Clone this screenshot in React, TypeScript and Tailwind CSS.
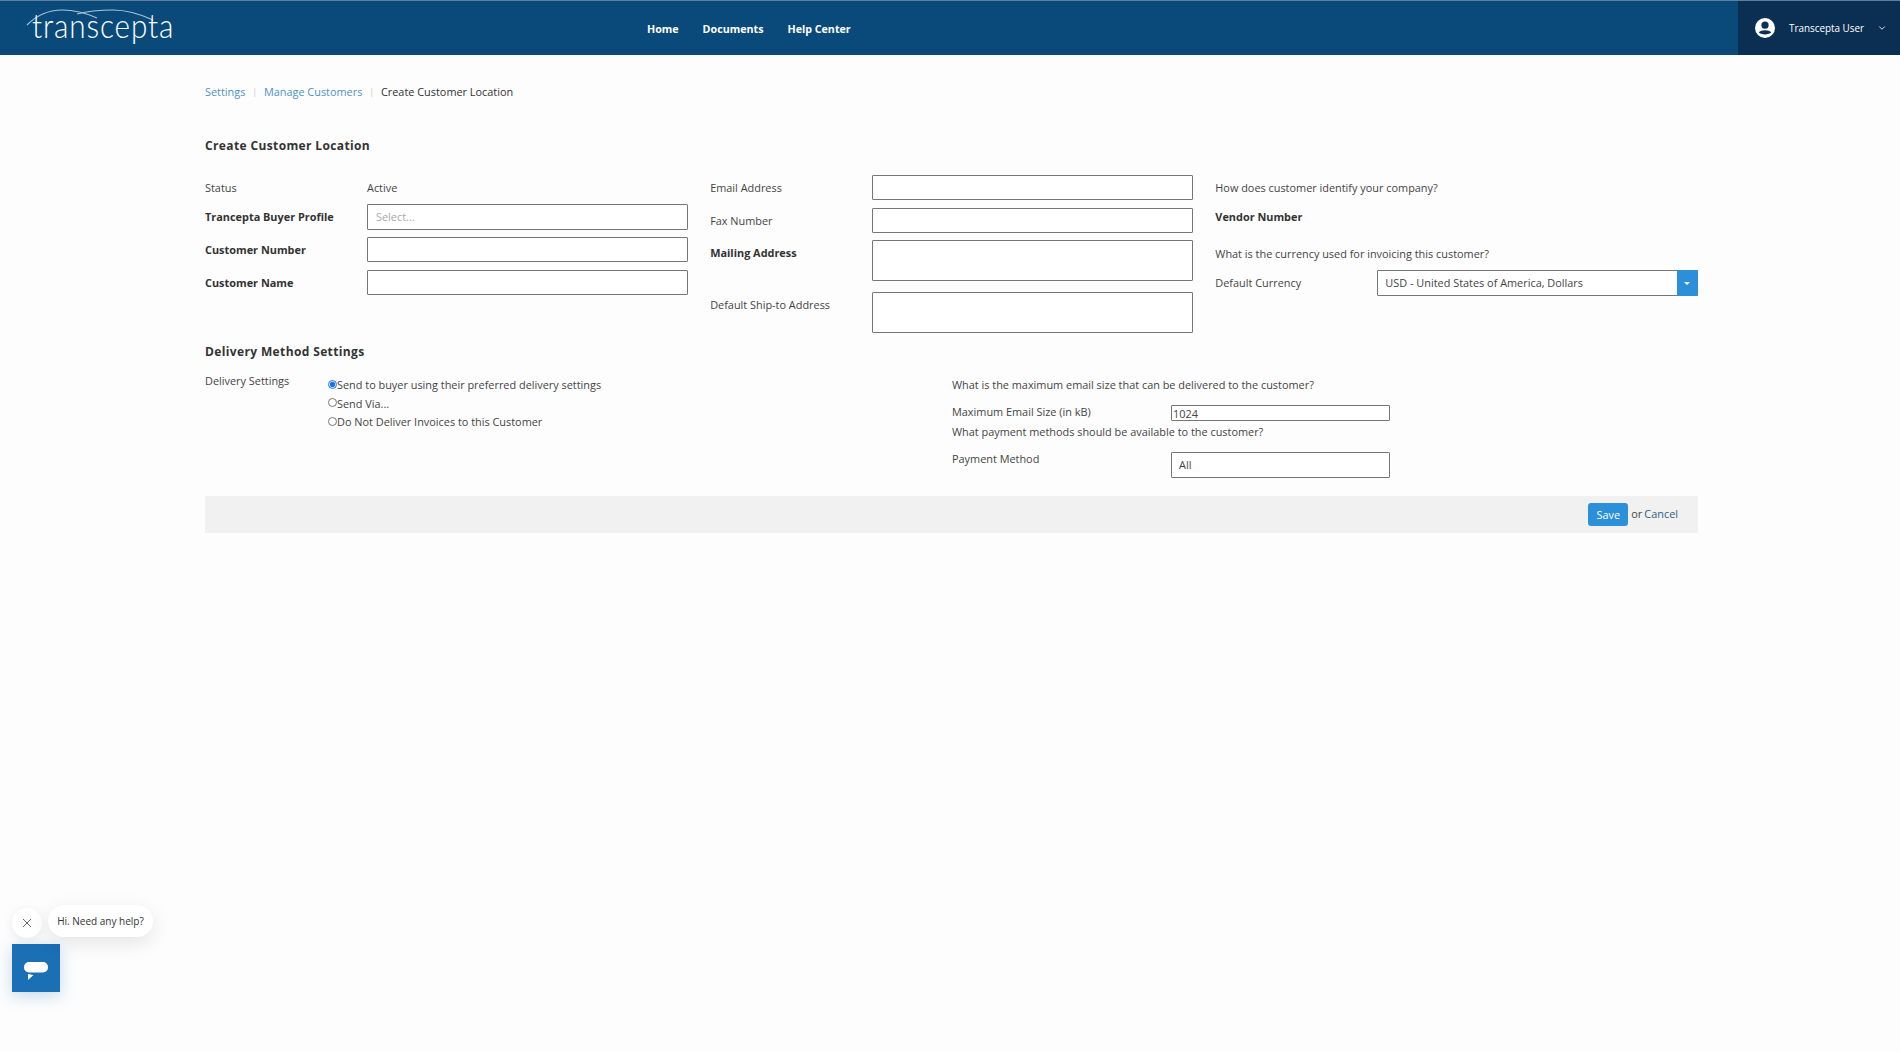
import React from "react";
import { ChevronDown } from "lucide-react";

const box = "border border-[#767676] bg-white rounded-[1px] outline-none";

function Label({ children, bold }: { children: React.ReactNode; bold?: boolean }) {
  return (
    <span className={`w-[162px] shrink-0 leading-[18px] ${bold ? "font-bold text-[#333333]" : "text-[#444444]"}`}>
      {children}
    </span>
  );
}

function Logo() {
  return (
    <div className="relative w-[146px] h-[33px] mt-[1px]">
      <svg className="absolute left-0 top-[-3px]" width="146" height="24" viewBox="0 0 146 24" fill="none">
        <path d="M1 17 C 12 6, 24 2, 36 2 C 48 2, 60 5, 71 10" stroke="#a9c4da" strokeWidth="1.2" />
        <path d="M51 6 C 62 3, 74 2, 87 2 C 100 2, 114 6, 127 12" stroke="#a9c4da" strokeWidth="1.2" />
      </svg>
      <span className="absolute left-[6px] top-[-8px] origin-left scale-x-[0.873] text-[34px] leading-[44px] font-light text-white tracking-[1px] font-['Lato',sans-serif] whitespace-nowrap">
        transcepta
      </span>
    </div>
  );
}

export default function App() {
  return (
    <div className="relative h-[1052px] overflow-hidden bg-[#fdfdfd] text-[10.9px] text-[#444444] font-['Open_Sans',sans-serif]">
      <header className="flex h-[55px] border-t border-[#5f7f9a] bg-[#0a4a7a] text-white">
        <div className="w-[647px] pl-[26px] pt-[9px] shrink-0">
          <Logo />
        </div>
        <nav className="flex flex-1 items-center gap-[24px] pt-[2px] font-bold text-[10.7px]">
          <span>Home</span>
          <span>Documents</span>
          <span>Help Center</span>
        </nav>
        <div className="flex w-[162px] items-center bg-[#0a2f52] pl-[17px] text-[9.9px]">
          <svg width="20" height="20" viewBox="0 0 20 20" className="shrink-0">
            <circle cx="10" cy="10" r="10" fill="#ffffff" />
            <circle cx="10" cy="7.2" r="3.6" fill="#0a2f52" />
            <path d="M3.8 14.6 C 5.5 11.6, 14.5 11.6, 16.2 14.6 C 14.5 17, 5.5 17, 3.8 14.6 Z" fill="#0a2f52" />
          </svg>
          <span className="ml-[14px] whitespace-nowrap">Transcepta User</span>
          <ChevronDown className="ml-[13px] size-[10px]" strokeWidth={2} />
        </div>
      </header>

      <main className="ml-[205px] w-[1493px]">
        <div className="mt-[28px] flex h-[18px] items-center leading-[18px]">
          <span className="text-[#4f93c4]">Settings</span>
          <span className="mx-[6.8px] text-[#c9c9c9] text-[9px]">|</span>
          <span className="text-[#4f93c4]">Manage Customers</span>
          <span className="mx-[6.8px] text-[#c9c9c9] text-[9px]">|</span>
          <span className="text-[#333333]">Create Customer Location</span>
        </div>

        <h1 className="mt-[35.5px] h-[18px] text-[12px] font-bold leading-[18px] tracking-[0.37px] text-[#333333]">
          Create Customer Location
        </h1>

        <div className="mt-[20.5px] grid grid-cols-3 gap-x-[22.5px]">
          <div className="flex flex-col">
            <div className="flex h-[26px] items-center">
              <Label>Status</Label>
              <span className="leading-[18px]">Active</span>
            </div>
            <div className="mt-[3px] flex items-center">
              <Label bold>Trancepta Buyer Profile</Label>
              <input placeholder="Select..." className={`${box} h-[26px] flex-1 min-w-0 px-[8px] pb-[2px] placeholder:text-[#a9a9a9]`} />
            </div>
            <div className="mt-[7px] flex items-center">
              <Label bold>Customer Number</Label>
              <input className={`${box} h-[25px] flex-1 min-w-0`} />
            </div>
            <div className="mt-[8px] flex items-center">
              <Label bold>Customer Name</Label>
              <input className={`${box} h-[25px] flex-1 min-w-0`} />
            </div>
          </div>

          <div className="flex flex-col">
            <div className="flex items-center">
              <Label>Email Address</Label>
              <input className={`${box} h-[25px] flex-1 min-w-0`} />
            </div>
            <div className="mt-[8px] flex items-center">
              <Label>Fax Number</Label>
              <input className={`${box} h-[25px] flex-1 min-w-0`} />
            </div>
            <div className="mt-[7px] flex items-start">
              <div className="w-[162px] shrink-0 pt-[4px]">
                <Label bold>Mailing Address</Label>
              </div>
              <textarea className={`${box} h-[41px] flex-1 min-w-0 resize-none`} />
            </div>
            <div className="mt-[11px] flex items-start">
              <div className="w-[162px] shrink-0 pt-[4px]">
                <Label>Default Ship-to Address</Label>
              </div>
              <textarea className={`${box} h-[41px] flex-1 min-w-0 resize-none`} />
            </div>
          </div>

          <div className="flex flex-col">
            <div className="flex h-[26px] items-center leading-[18px]">How does customer identify your company?</div>
            <div className="mt-[7px] h-[18px] font-bold leading-[18px] text-[#333333]">Vendor Number</div>
            <div className="mt-[19px] h-[18px] leading-[18px]">What is the currency used for invoicing this customer?</div>
            <div className="mt-[7px] flex items-center">
              <Label>Default Currency</Label>
              <div className={`${box} relative flex h-[26px] flex-1 min-w-0 items-center pl-[7px]`}>
                USD - United States of America, Dollars
                <div className="absolute -right-px -top-px -bottom-px flex w-[21px] items-center justify-center rounded-r-[1px] bg-[#2b90d9]">
                  <span className="h-0 w-0 border-x-[3px] border-t-[3px] border-x-transparent border-t-white" />
                </div>
              </div>
            </div>
          </div>
        </div>

        <h2 className="mt-[10px] h-[18px] text-[12px] font-bold leading-[18px] tracking-[0.37px] text-[#333333]">
          Delivery Method Settings
        </h2>

        <div className="mt-[15px] flex">
          <div className="flex w-[747px] shrink-0">
            <span className="w-[123px] shrink-0 -mt-[4px] leading-[18px]">Delivery Settings</span>
            <div className="flex flex-col leading-[18px]">
              {[
                "Send to buyer using their preferred delivery settings",
                "Send Via...",
                "Do Not Deliver Invoices to this Customer",
              ].map((t, i) => (
                <label key={t} className="flex h-[18.5px] items-center">
                  <input
                    type="radio"
                    name="delivery"
                    defaultChecked={i === 0}
                    className="m-0 -mt-[2px] size-[9px] shrink-0 accent-[#1a73e8]"
                  />
                  <span>{t}</span>
                </label>
              ))}
            </div>
          </div>
          <div className="flex flex-col">
            <div className="h-[18px] leading-[18px]">What is the maximum email size that can be delivered to the customer?</div>
            <div className="mt-[11px] flex items-center">
              <span className="-mt-[2px] w-[219px] shrink-0 leading-[18px]">Maximum Email Size (in kB)</span>
              <input
                defaultValue="1024"
                className={`${box} h-[16px] w-[219px] pl-[1px] pt-[1px] text-[10.9px] leading-[14px] text-[#444444]`}
              />
            </div>
            <div className="mt-[2px] h-[18px] leading-[18px]">What payment methods should be available to the customer?</div>
            <div className="mt-[9px] flex items-start">
              <span className="w-[219px] shrink-0 leading-[18px]">Payment Method</span>
              <div className={`${box} mt-[2px] flex h-[26px] w-[219px] items-center pl-[7px]`}>All</div>
            </div>
          </div>
        </div>

        <div className="mt-[18px] flex h-[37px] items-center justify-end bg-[#f1f1f1] pr-[20px]">
          <button className="h-[23px] w-[40px] rounded-[3px] bg-[#2b90d9] pt-[1px] text-[10.9px] text-white">Save</button>
          <span className="ml-[3px]">or</span>
          <span className="ml-[2px] text-[#2e5f85]">Cancel</span>
        </div>
      </main>

      <div className="absolute left-[12px] top-[905px] w-[150px]">
        <div className="flex items-start">
          <div className="mt-[3px] flex size-[30px] items-center justify-center rounded-full bg-white text-[#6b6b6b] shadow-[0_2px_12px_rgba(0,0,0,0.08)]">
            <svg width="10" height="10" viewBox="0 0 10 10" fill="none" stroke="currentColor" strokeWidth="1">
              <path d="M1 1 L9 9 M9 1 L1 9" />
            </svg>
          </div>
          <div className="ml-[6px] flex h-[32px] w-[105px] items-center justify-center rounded-[16px] bg-white text-[10px] text-[#333333] shadow-[0_6px_20px_rgba(0,0,0,0.1)]">
            Hi. Need any help?
          </div>
        </div>
        <div className="mt-[6px] flex size-[48px] items-center justify-center bg-[#1b6fb5] shadow-[0_4px_16px_rgba(27,111,181,0.25)]">
          <svg width="26" height="24" viewBox="0 0 26 24" fill="#ffffff">
            <rect x="1" y="6" width="24" height="10.5" rx="5" />
            <path d="M5 18 L5 24 L10.5 19 Z" />
          </svg>
        </div>
      </div>
    </div>
  );
}
